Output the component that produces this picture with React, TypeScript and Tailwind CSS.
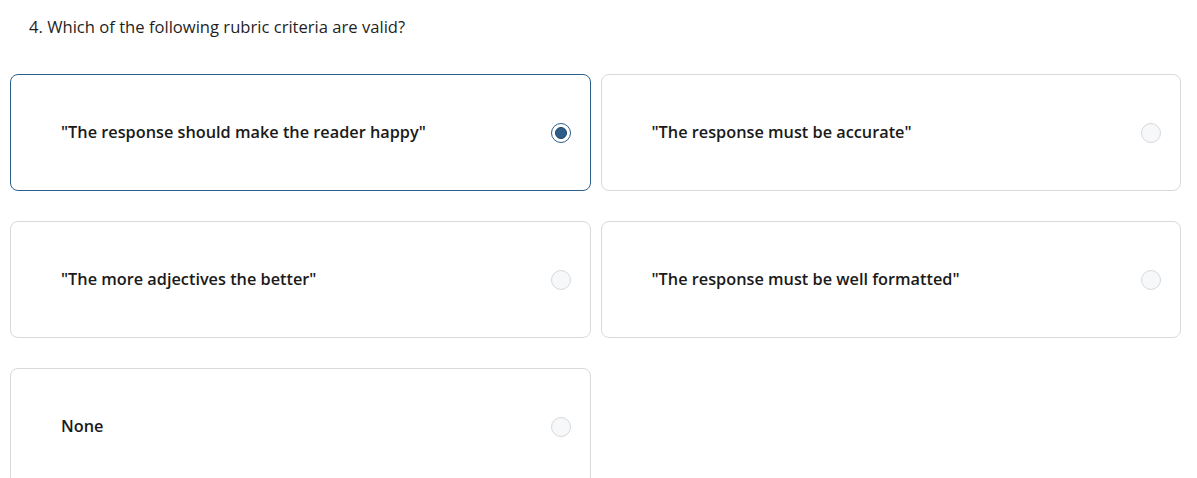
import { useState } from 'react';

const options = [
  '"The response should make the reader happy"',
  '"The response must be accurate"',
  '"The more adjectives the better"',
  '"The response must be well formatted"',
  'None',
];

function Radio({ checked }: { checked: boolean }) {
  if (checked) {
    return (
      <span className="flex h-5 w-5 shrink-0 items-center justify-center rounded-full border-[1.5px] border-[#2b5f8c] bg-white">
        <span className="h-3 w-3 rounded-full border border-[#1f3f5f] bg-[#2d5e8a]" />
      </span>
    );
  }
  return <span className="h-5 w-5 shrink-0 rounded-full border border-[#d6d8dc] bg-[#f7f8fa]" />;
}

export default function App() {
  const [selected, setSelected] = useState(0);

  return (
    <div className="min-h-screen bg-white pt-[15px] pl-[10px] pr-[16px] font-['Open_Sans',sans-serif] text-[#1f1f1f]">
      <h2 className="pl-[19px] text-[16.6px] leading-[24px] font-normal">
        4. Which of the following rubric criteria are valid?
      </h2>

      <div className="mt-[35px] grid grid-cols-2 gap-x-[10px] gap-y-[30px]">
        {options.map((opt, i) => (
          <button
            key={opt}
            type="button"
            onClick={() => setSelected(i)}
            className={
              'flex h-[117px] items-center justify-between rounded-lg border bg-white pl-[50px] pr-[19px] text-left ' +
              (selected === i ? 'border-[#2b5f8c]' : 'border-[#d9d9dc]')
            }
          >
            <span className="text-[16.3px] font-semibold text-[#1a1a1a]">{opt}</span>
            <Radio checked={selected === i} />
          </button>
        ))}
      </div>
    </div>
  );
}
